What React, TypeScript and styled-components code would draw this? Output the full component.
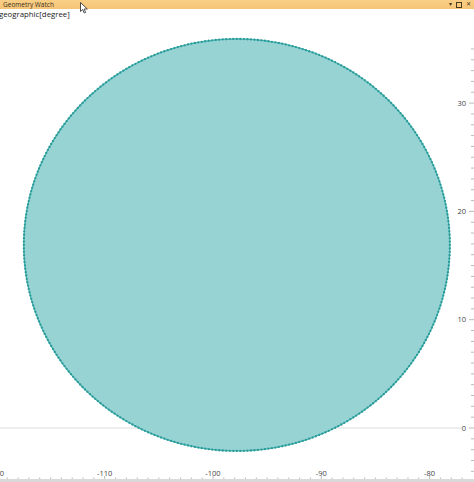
import styled, { createGlobalStyle } from 'styled-components'

const GlobalStyle = createGlobalStyle`
  html, body {
    margin: 0;
    padding: 0;
    background: #ffffff;
  }
  body {
    font-family: 'Open Sans', 'Noto Sans', sans-serif;
  }
`

// plot scale, page pixels per degree
const PX = 10.83
const PLOT_TOP = 19
const xOf = (lon: number) => 213 + (lon + 100) * PX
const yOf = (lat: number) => 428 - lat * PX

const center = { x: xOf(-97.8), y: yOf(16.9) }
const RX = 213
const RY = 206
const VERTS = 380

const ring = Array.from({ length: VERTS }, (_, i) => {
  const a = (i / VERTS) * Math.PI * 2
  return { x: center.x + RX * Math.cos(a), y: center.y + RY * Math.sin(a) }
})

const latTicks = Array.from({ length: 41 }, (_, i) => i - 5)
const lonTicks = Array.from({ length: 46 }, (_, i) => i - 122)

export default function App() {
  return (
    <>
      <GlobalStyle />
      <Window>
        <TitleBar>
          <Title>Geometry Watch</Title>
          <Buttons>
            <span>▾</span>
            <BoxIcon />
            <span>✕</span>
          </Buttons>
          <Cursor viewBox="0 0 8 12">
            <path d="M0.5 0.5 L0.5 9.5 L2.7 7.5 L4.2 11 L5.6 10.4 L4.2 7 L7.3 7 Z" fill="#fff" stroke="#222" strokeWidth="0.8" />
          </Cursor>
        </TitleBar>
        <Caption>geographic[degree]</Caption>
        <Plot viewBox={`0 ${PLOT_TOP} 474 ${482 - PLOT_TOP}`}>
          <line x1={0} x2={462} y1={yOf(0)} y2={yOf(0)} stroke="#dcdcdc" strokeWidth={1} />

          <polygon
            points={ring.map((p) => `${p.x.toFixed(2)},${p.y.toFixed(2)}`).join(' ')}
            fill="#98d3d4"
            stroke="#45b3b0"
            strokeWidth={1.3}
          />
          {ring.map((p, i) => (
            <circle key={i} cx={p.x} cy={p.y} r={1.15} fill="#2a9a98" />
          ))}

          {/* right axis */}
          {latTicks.map((v) => {
            const major = v % 10 === 0
            return (
              <line
                key={v}
                x1={major ? 469 : 471}
                x2={474}
                y1={yOf(v)}
                y2={yOf(v)}
                stroke="#a8a8a8"
                strokeWidth={0.8}
              />
            )
          })}
          {[0, 10, 20, 30].map((v) => (
            <AxisText key={v} x={466} y={yOf(v) + 2.6} textAnchor="end">
              {v}
            </AxisText>
          ))}

          {/* bottom axis */}
          <rect x={0} y={479} width={474} height={3} fill="#d9d9d9" />
          {lonTicks.map((v) => {
            const major = v % 10 === 0
            return (
              <line
                key={v}
                x1={xOf(v)}
                x2={xOf(v)}
                y1={major ? 476 : 477.5}
                y2={479}
                stroke="#a8a8a8"
                strokeWidth={0.8}
              />
            )
          })}
          {[-120, -110, -100, -90, -80].map((v) => (
            <AxisText key={v} x={xOf(v)} y={475.5} textAnchor="middle">
              {v}
            </AxisText>
          ))}
        </Plot>
      </Window>
    </>
  )
}

const Window = styled.div`
  width: 474px;
  height: 482px;
  display: flex;
  flex-direction: column;
  overflow: hidden;
  background: #ffffff;
`

const TitleBar = styled.div`
  position: relative;
  height: 9px;
  flex: 0 0 9px;
  display: flex;
  align-items: center;
  justify-content: space-between;
  padding: 0 3px 0 3px;
  background: linear-gradient(#f9cf86, #f5c577);
`

const Title = styled.span`
  font-size: 6.5px;
  line-height: 9px;
  color: #3a3020;
`

const Buttons = styled.div`
  display: flex;
  align-items: center;
  gap: 4px;
  font-size: 5.5px;
  color: #4a3b20;
  line-height: 9px;
`

const BoxIcon = styled.span`
  display: inline-block;
  width: 4px;
  height: 4px;
  border: 1px solid #4a3b20;
  border-top-width: 1.5px;
`

const Cursor = styled.svg`
  position: absolute;
  left: 80px;
  top: 2px;
  width: 8px;
  height: 12px;
  overflow: visible;
`

const Caption = styled.div`
  height: 10px;
  flex: 0 0 10px;
  font-size: 7.8px;
  line-height: 10px;
  color: #1a1a1a;
  margin-left: -1px;
`

const Plot = styled.svg`
  display: block;
  width: 474px;
  flex: 1 1 auto;
`

const AxisText = styled.text`
  font-family: 'Open Sans', 'Noto Sans', sans-serif;
  font-size: 7.5px;
  fill: #444444;
`
